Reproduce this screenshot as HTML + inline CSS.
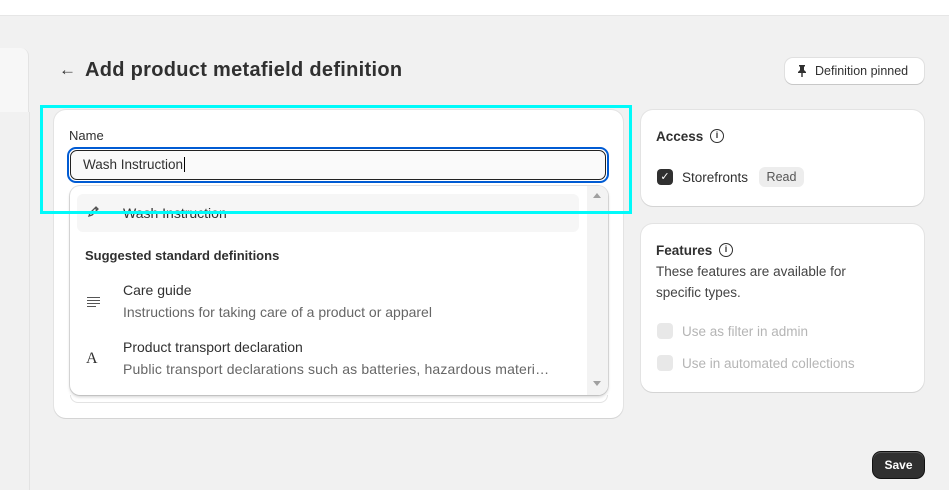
<!DOCTYPE html>
<html><head><style>
*{box-sizing:border-box;margin:0;padding:0}
body{width:949px;height:490px;background:#f1f1f1;font-family:"Liberation Sans",sans-serif;color:#303030;position:relative;overflow:hidden;font-size:13px}
.abs{position:absolute;white-space:nowrap}
.card{position:absolute;background:#fff;border-radius:12px;box-shadow:0 1px 0 #d4d4d4,0 0 0 1px #e3e3e3}
</style></head><body>
<div class="abs" style="left:0;top:0;width:949px;height:16px;background:#fff;border-bottom:1px solid #e6e6e6"></div>
<div class="abs" style="left:0;top:48px;width:29px;height:64px;background:#f7f7f7;border-radius:0 8px 0 0;border-right:1px solid #e3e3e3"></div>
<div class="abs" style="left:29px;top:112px;width:1px;height:378px;background:#e3e3e3"></div>

<div class="abs" style="left:59px;top:60px;font-size:17px">←</div>
<div class="abs" style="left:85px;top:59px;font-size:20px;font-weight:bold;color:#303030;letter-spacing:0.3px">Add product metafield definition</div>

<div class="abs" style="left:785px;top:58px;width:139px;height:26px;background:#fff;border-radius:8px;box-shadow:0 1px 0 #c8c8c8,0 0 0 1px #e0e0e0;font-size:12.5px;line-height:26px;padding-left:30px">Definition pinned
<svg class="abs" style="left:11px;top:6px" width="12" height="14" viewBox="0 0 12 14"><path d="M3 1h6v1l-1 1v3l2 2v1H2V8l2-2V3L3 2z M5.3 9h1.4v4H5.3z" fill="#303030"/></svg></div>

<div class="card" style="left:54px;top:110px;width:569px;height:308px"></div>
<div class="abs" style="left:69px;top:128px;font-size:13px">Name</div>
<div class="abs" style="left:67px;top:147px;width:542px;height:36px;border:2px solid #005bd3;border-radius:9px;padding:1px">
<div style="width:100%;height:100%;border:1px solid #222;border-radius:7px;background:#fafafa;padding-left:12px;line-height:28px;font-size:13.5px">Wash Instruction<span style="border-left:1px solid #000;margin-left:1px"></span></div></div>
<div class="abs" style="left:70px;top:395px;width:538px;height:8px;border:1px solid #e3e3e3;border-top:none;border-radius:0 0 8px 8px"></div>
<div class="abs" style="left:70px;top:186px;width:538px;height:209px;background:#fff;border-radius:10px;box-shadow:0 2px 3px rgba(0,0,0,.18),0 0 0 1px #e3e3e3;overflow:hidden">
<div class="abs" style="left:517px;top:0;width:21px;height:209px;background:#f3f3f3"></div>
<div class="abs" style="left:523px;top:7px;width:0;height:0;border:4px solid transparent;border-bottom:5px solid #a0a0a0;border-top:none"></div>
<div class="abs" style="left:523px;top:195px;width:0;height:0;border:4px solid transparent;border-top:5px solid #a0a0a0;border-bottom:none"></div>
<div class="abs" style="left:7px;top:8px;width:502px;height:38px;background:#f6f6f6;border-radius:6px"></div>
<svg class="abs" style="left:17px;top:18px" width="14" height="14" viewBox="0 0 14 14"><path d="M2 12l1-3 6-6 2 2-6 6z M8 4l2 2" fill="none" stroke="#555" stroke-width="1.3"/></svg>
<div class="abs" style="left:53px;top:19px;font-size:14px;color:#303030">Wash Instruction</div>
<div class="abs" style="left:15px;top:62px;font-size:13px;font-weight:bold">Suggested standard definitions</div>
<div class="abs" style="left:17px;top:111px;width:13px;height:1.3px;background:#555;box-shadow:0 3px 0 #555,0 6px 0 #555"></div>
<div class="abs" style="left:17px;top:120px;width:9px;height:1.3px;background:#555"></div>
<div class="abs" style="left:16px;top:164px;font-size:16px;font-family:'Liberation Serif',serif">A</div>
<div class="abs" style="left:53px;top:96px;font-size:14px">Care guide</div>
<div class="abs" style="left:53px;top:118px;font-size:14px;color:#666">Instructions for taking care of a product or apparel</div>
<div class="abs" style="left:53px;top:153px;font-size:14px">Product transport declaration</div>
<div class="abs" style="left:53px;top:175px;font-size:14px;color:#666;letter-spacing:0.15px">Public transport declarations such as batteries, hazardous materi…</div>
</div>
<div class="abs" style="left:40px;top:105px;width:592px;height:109px;border:3px solid #00fafa"></div>

<div class="card" style="left:641px;top:110px;width:283px;height:96px"></div>
<div class="abs" style="left:656px;top:129px;font-size:13.5px;font-weight:bold">Access</div>
<div class="abs" style="left:710px;top:129px;width:14px;height:14px;border:1.4px solid #303030;border-radius:50%;font-size:9px;font-weight:bold;text-align:center;line-height:11px">i</div>
<div class="abs" style="left:657px;top:169px;width:16px;height:16px;background:#303030;border-radius:4px;color:#fff;font-size:11px;text-align:center;line-height:16px">✓</div>
<div class="abs" style="left:682px;top:170px;font-size:13.5px">Storefronts</div>
<div class="abs" style="left:759px;top:167px;width:45px;height:20px;background:#ededed;border-radius:6px;font-size:12.5px;color:#555;text-align:center;line-height:20px">Read</div>

<div class="card" style="left:641px;top:224px;width:283px;height:168px"></div>
<div class="abs" style="left:656px;top:243px;font-size:13.5px;font-weight:bold">Features</div>
<div class="abs" style="left:719px;top:243px;width:14px;height:14px;border:1.4px solid #303030;border-radius:50%;font-size:9px;font-weight:bold;text-align:center;line-height:11px">i</div>
<div class="abs" style="left:656px;top:261px;font-size:13.5px;line-height:21px;color:#444;white-space:normal;width:210px">These features are available for specific types.</div>
<div class="abs" style="left:657px;top:323px;width:16px;height:16px;background:#e8e8e8;border-radius:4px"></div>
<div class="abs" style="left:682px;top:324px;font-size:13.5px;color:#b5b5b5">Use as filter in admin</div>
<div class="abs" style="left:657px;top:355px;width:16px;height:16px;background:#e8e8e8;border-radius:4px"></div>
<div class="abs" style="left:682px;top:356px;font-size:13.5px;color:#b5b5b5">Use in automated collections</div>

<div class="abs" style="left:873px;top:452px;width:51px;height:26px;background:#303030;border-radius:8px;box-shadow:0 0 0 1px #111,inset 0 1px 0 #555;color:#fff;font-size:12px;font-weight:bold;text-align:center;line-height:26px">Save</div>
</body></html>
